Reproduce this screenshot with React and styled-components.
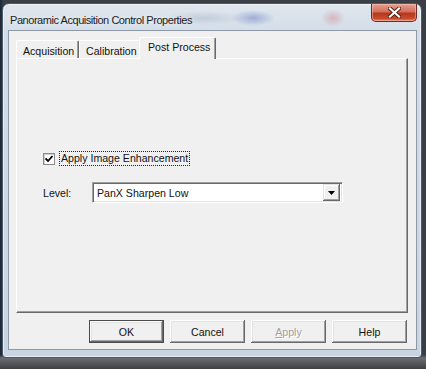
import React from "react";
import styled, { createGlobalStyle, css } from "styled-components";

const GlobalStyle = createGlobalStyle`
  html, body { margin: 0; padding: 0; }
  body {
    background: #2f343b;
    font-family: "Liberation Sans", Arial, sans-serif;
  }
`;

const Desktop = styled.div`
  width: 426px;
  height: 369px;
  overflow: hidden;
  box-sizing: border-box;
  padding: 3px 0 0 2px;
  background:
    linear-gradient(180deg, transparent 0, transparent 355px, #6b6d70 358px, #3d3f42 369px),
    linear-gradient(90deg, #1b2738 0, #23344a 2px, #3a3f46 3px);
`;

const Window = styled.div`
  width: 420px;
  height: 355px;
  box-sizing: border-box;
  border: 1px solid #4e5965;
  border-radius: 7px 7px 4px 4px;
  background:
    radial-gradient(ellipse 22px 8px at 250px 14px, rgba(90, 110, 190, 0.45), transparent),
    radial-gradient(ellipse 12px 9px at 330px 14px, rgba(200, 100, 110, 0.35), transparent),
    radial-gradient(ellipse 40px 7px at 200px 14px, rgba(150, 165, 185, 0.35), transparent),
    linear-gradient(180deg, #dfe6ee 0, #d3dde8 30px, #c7d4e2 100%);
  box-shadow: inset 0 0 0 1px rgba(255, 255, 255, 0.55);
  display: flex;
  flex-direction: column;
  padding: 0 4px 7px 5px;
`;

const TitleBar = styled.div`
  height: 27px;
  display: flex;
  align-items: flex-start;
`;

const Title = styled.span`
  margin: 10px 0 0 2px;
  font-size: 11px;
  letter-spacing: -0.45px;
  color: #1c1c1c;
  text-shadow: 0 0 6px rgba(255, 255, 255, 0.9);
`;

const CloseButton = styled.div`
  margin-left: auto;
  width: 46px;
  height: 18px;
  box-sizing: border-box;
  border: 1px solid #6a2a22;
  border-top: none;
  border-radius: 0 0 5px 5px;
  background: linear-gradient(180deg, #e8a08f 0, #d2705b 45%, #b8381f 55%, #c9492b 85%, #de8a6e 100%);
  box-shadow: inset 0 0 0 1px rgba(255, 210, 200, 0.45);
  display: flex;
  align-items: center;
  justify-content: center;
`;

const Client = styled.div`
  flex: 1;
  box-sizing: border-box;
  background: #f0f0f0;
  border: 1px solid #8d99a7;
  display: flex;
  flex-direction: column;
  padding: 6px 8px 6px 7px;
`;

const TabStrip = styled.div`
  height: 21px;
  display: flex;
  align-items: flex-end;
  position: relative;
  z-index: 1;
`;

const Tab = styled.div`
  box-sizing: border-box;
  height: ${(p) => (p.$active ? 22 : 18)}px;
  margin: 0 ${(p) => (p.$active ? -2 : 0)}px ${(p) => (p.$active ? -1 : 0)}px;
  padding: ${(p) => (p.$active ? "3px 8px 0" : "4px 6px 0 6px")};
  width: ${(p) => p.$w}px;
  font-size: 10.6px;
  color: #111;
  background: #f0f0f0;
  border-top: 1px solid #fff;
  border-left: 1px solid #fff;
  border-right: 1px solid #696969;
  border-radius: 2px 2px 0 0;
  box-shadow: inset -1px 0 #a0a0a0;
  white-space: nowrap;
  position: relative;
  z-index: ${(p) => (p.$active ? 2 : 1)};
`;

const Panel = styled.div`
  height: 255px;
  box-sizing: border-box;
  background: #f0f0f0;
  border-top: 1px solid #fff;
  border-left: 1px solid #fff;
  border-right: 1px solid #696969;
  border-bottom: 1px solid #696969;
  box-shadow: inset -1px -1px #a0a0a0;
  padding: 92px 0 0 26px;
  display: flex;
  flex-direction: column;
`;

const CheckRow = styled.div`
  display: flex;
  align-items: center;
  height: 15px;
`;

const CheckBox = styled.div`
  width: 12px;
  height: 12px;
  box-sizing: border-box;
  border: 1px solid #8a8a8a;
  background: #fff;
  box-shadow: inset 1px 1px #d0d0d0;
  display: flex;
  align-items: center;
  justify-content: center;
`;

const CheckLabel = styled.span`
  margin-left: 4px;
  padding: 0 1px;
  border: 1px dotted #222;
  font-size: 10.6px;
  line-height: 13px;
  color: #111;
`;

const LevelRow = styled.div`
  display: flex;
  align-items: center;
  margin-top: 16px;
`;

const Label = styled.span`
  width: 49px;
  font-size: 10.6px;
  color: #111;
`;

const Combo = styled.div`
  width: 251px;
  height: 21px;
  box-sizing: border-box;
  background: #fff;
  border-top: 1px solid #a0a0a0;
  border-left: 1px solid #a0a0a0;
  border-right: 1px solid #fff;
  border-bottom: 1px solid #fff;
  box-shadow: inset 1px 1px #696969, inset -1px -1px #e3e3e3;
  display: flex;
  align-items: center;
  padding: 2px;
`;

const ComboText = styled.span`
  flex: 1;
  padding-left: 2px;
  font-size: 10.6px;
  color: #111;
`;

const DropButton = styled.div`
  width: 17px;
  height: 17px;
  box-sizing: border-box;
  background: #f0f0f0;
  box-shadow: inset -1px -1px #696969, inset 1px 1px #e3e3e3, inset -2px -2px #a0a0a0, inset 2px 2px #fff;
  display: flex;
  align-items: center;
  justify-content: center;
`;

const ButtonRow = styled.div`
  margin-top: 7px;
  display: flex;
  justify-content: flex-end;
  gap: 6px;
  padding-right: 1px;
`;

const Button = styled.div`
  width: 75px;
  height: 23px;
  box-sizing: border-box;
  background: #f0f0f0;
  font-size: 10.6px;
  color: #111;
  display: flex;
  align-items: center;
  justify-content: center;
  box-shadow: inset -1px -1px #696969, inset 1px 1px #fff, inset -2px -2px #a0a0a0, inset 2px 2px #e3e3e3;
  ${(p) =>
    p.$default &&
    css`
      border: 1px solid #4a4a4a;
    `}
  ${(p) =>
    p.$disabled &&
    css`
      color: #a0a0a0;
      text-shadow: 1px 1px 0 #fff;
    `}
`;

const Underline = styled.span`
  text-decoration: underline;
`;

export default function App() {
  return (
    <>
      <GlobalStyle />
      <Desktop>
        <Window>
          <TitleBar>
            <Title>Panoramic Acquisition Control Properties</Title>
            <CloseButton>
              <svg width="13" height="11" viewBox="0 0 13 11">
                <path
                  d="M2 1.5 L11 9.5 M11 1.5 L2 9.5"
                  stroke="#4a1e16"
                  strokeWidth="4"
                  strokeLinecap="square"
                />
                <path
                  d="M2 1.5 L11 9.5 M11 1.5 L2 9.5"
                  stroke="#fff"
                  strokeWidth="2.2"
                  strokeLinecap="square"
                />
              </svg>
            </CloseButton>
          </TitleBar>
          <Client>
            <TabStrip>
              <Tab $w={63}>Acquisition</Tab>
              <Tab $w={62}>Calibration</Tab>
              <Tab $active $w={77}>Post Process</Tab>
            </TabStrip>
            <Panel>
              <CheckRow>
                <CheckBox>
                  <svg width="8" height="8" viewBox="0 0 8 8">
                    <path d="M0.5 3.5 L3 6 L7.5 1" stroke="#000" strokeWidth="1.8" fill="none" />
                  </svg>
                </CheckBox>
                <CheckLabel>Apply Image Enhancement</CheckLabel>
              </CheckRow>
              <LevelRow>
                <Label>Level:</Label>
                <Combo>
                  <ComboText>PanX Sharpen Low</ComboText>
                  <DropButton>
                    <svg width="7" height="4" viewBox="0 0 7 4">
                      <path d="M0 0 H7 L3.5 4 Z" fill="#000" />
                    </svg>
                  </DropButton>
                </Combo>
              </LevelRow>
            </Panel>
            <ButtonRow>
              <Button $default>OK</Button>
              <Button>Cancel</Button>
              <Button $disabled>
                <Underline>A</Underline>pply
              </Button>
              <Button>Help</Button>
            </ButtonRow>
          </Client>
        </Window>
      </Desktop>
    </>
  );
}
